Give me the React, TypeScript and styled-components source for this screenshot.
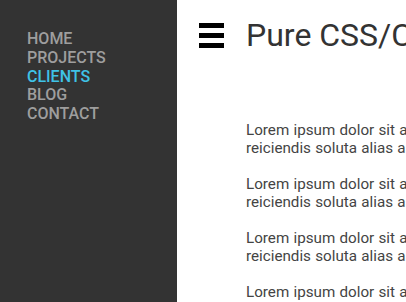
import React from 'react';
import styled, { createGlobalStyle } from 'styled-components';

const GlobalStyle = createGlobalStyle`
  html, body {
    margin: 0;
    padding: 0;
    background: #fff;
    overflow: hidden;
  }
  body {
    font-family: Roboto, 'Liberation Sans', sans-serif;
  }
`;

// layout shell: dark side menu + content column
const Page = styled.div`
  display: flex;
  width: 406px;
  height: 302px;
  overflow: hidden;
`;

const Sidebar = styled.nav`
  flex: 0 0 177px;
  background: #333333;
  padding: 30px 0 0 27px;
  box-sizing: border-box;
`;

const NavList = styled.ul`
  list-style: none;
  margin: 0;
  padding: 0;
`;

const NavItem = styled.li<{ $active?: boolean }>`
  font-size: 16px;
  font-weight: 500;
  line-height: 18.75px;
  color: ${(p) => (p.$active ? '#3fc2e6' : '#9e9e9e')};
  white-space: nowrap;
`;

const Main = styled.main`
  flex: 1;
  min-width: 0;
  padding: 23px 0 0 22px;
  box-sizing: border-box;
`;

const Header = styled.header`
  display: flex;
  align-items: center;
  gap: 22px;
  height: 25px;
`;

const Burger = styled.div`
  display: flex;
  flex-direction: column;
  justify-content: space-between;
  width: 25px;
  height: 25px;
  flex: none;

  span {
    display: block;
    height: 5px;
    background: #000;
  }
`;

const Title = styled.h1`
  margin: 0;
  font-size: 32px;
  font-weight: 400;
  color: #333;
  white-space: nowrap;
  line-height: 25px;
`;

const Content = styled.section`
  padding: 74px 0 0 47px;
`;

const Para = styled.p`
  margin: 0 0 19px;
  font-size: 15.2px;
  line-height: 17.5px;
  color: #444;
  white-space: nowrap;
  word-spacing: 0.5px;
`;

const links = ['HOME', 'PROJECTS', 'CLIENTS', 'BLOG', 'CONTACT'];

export default function App() {
  return (
    <>
      <GlobalStyle />
      <Page>
        <Sidebar>
          <NavList>
            {links.map((l) => (
              <NavItem key={l} $active={l === 'CLIENTS'}>
                {l}
              </NavItem>
            ))}
          </NavList>
        </Sidebar>
        <Main>
          <Header>
            <Burger>
              <span />
              <span />
              <span />
            </Burger>
            <Title>Pure CSS/Checkbox Off-canvas Menu</Title>
          </Header>
          <Content>
            {[0, 1, 2, 3].map((i) => (
              <Para key={i}>
                Lorem ipsum dolor sit amet, consectetur adipisicing elit.
                <br />
                reiciendis soluta alias aspernatur quisquam.
              </Para>
            ))}
          </Content>
        </Main>
      </Page>
    </>
  );
}
